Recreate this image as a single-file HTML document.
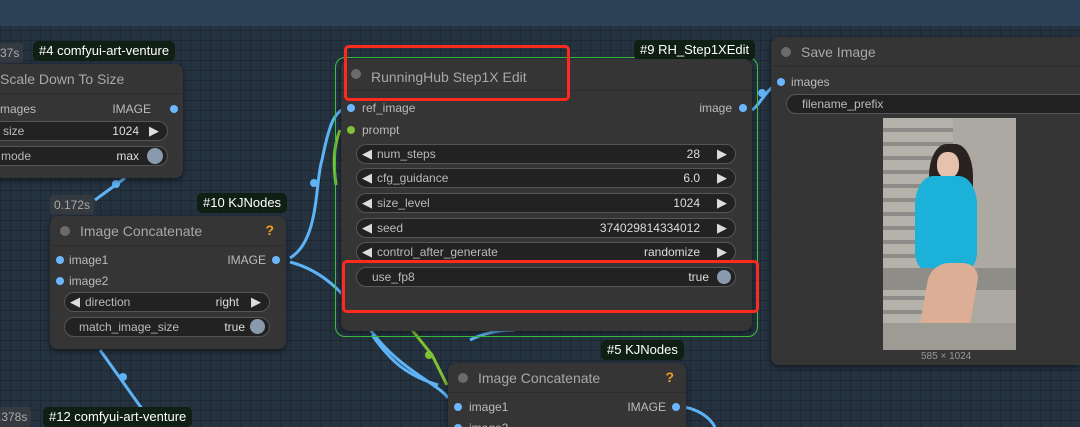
<!DOCTYPE html>
<html><head><meta charset="utf-8"><style>
*{margin:0;padding:0;box-sizing:border-box}
html,body{width:1080px;height:427px;overflow:hidden}
body{position:relative;font-family:"Liberation Sans",sans-serif;
background-color:#253240;
background-image:linear-gradient(rgba(0,0,0,.18) 1px,transparent 1px),linear-gradient(90deg,rgba(0,0,0,.18) 1px,transparent 1px);
background-size:10px 10px;}
.top{position:absolute;left:0;top:0;width:1080px;height:26px;background:#2c4256}
.node{position:absolute;background:#353535;border-radius:8px;box-shadow:0 2px 6px rgba(0,0,0,.5);overflow:hidden}
.title{height:30px;border-bottom:1px solid #2e2e2e;color:#a8a8a8;font-size:14px;line-height:30px;padding-left:30px;position:relative}
.title:before{content:"";position:absolute;left:10px;top:10px;width:10px;height:10px;border-radius:50%;background:#6b6b6b}
.badge{position:absolute;background:#0f1f14;color:#fff;font-size:13px;padding:0 6px;height:20px;line-height:20px;border-radius:5px}
.tm{position:absolute;background:#343a40;color:#aaa;font-size:12px;height:20px;line-height:20px;padding:0 4px;border-radius:4px}
.slot{position:absolute;font-size:12px;color:#bbb}
.dot{position:absolute;width:8px;height:8px;border-radius:50%;background:#6ab7ff}
.w{position:absolute;height:20px;border:1px solid #555;border-radius:10px;background:#222;color:#bbb;font-size:12px;line-height:18px}
.w .l{position:absolute;left:8px}
.w .v{position:absolute;right:24px;color:#ddd}
.w .ar{position:absolute;right:5px;color:#ddd;font-size:13px}
.w .al{position:absolute;left:5px;color:#ddd;font-size:13px}
.tg{position:absolute;right:4px;top:3px;width:13px;height:13px;border-radius:50%;background:#8a9aae}
.red{position:absolute;border:3px solid #ff2a1f;border-radius:5px}
.q{position:absolute;color:#f0a020;font-weight:bold;font-size:14px}
</style></head><body>
<div class="top"></div>
<svg width="1080" height="427" style="position:absolute;left:0;top:0" fill="none">
<g stroke="#5db3f5" stroke-width="3">
<path d="M95 200 L125 178"/>
<path d="M290 258 C320 240 315 180 322 160 C330 120 335 110 350 107"/>
<path d="M290 262 C340 275 360 320 372 332 C400 370 440 385 448 398"/>
<path d="M100 350 L150 420"/>
<path d="M752 110 C760 105 762 95 775 85"/>
<path d="M372 335 C390 360 405 375 438 385"/>
<path d="M470 340 C480 335 495 330 515 330"/>
<path d="M684 407 C700 410 710 418 715 427"/>
</g>
<path d="M340 130 C332 150 334 170 336 185" stroke="#7fc034" stroke-width="3"/>
<path d="M412 330 L432 355 L447 385" stroke="#7fc034" stroke-width="3"/>
<circle cx="116" cy="184" r="4" fill="#5db3f5"/>
<circle cx="314" cy="183" r="4" fill="#5db3f5"/>
<circle cx="123" cy="377" r="4" fill="#5db3f5"/>
<circle cx="762" cy="93" r="4" fill="#5db3f5"/>
<circle cx="429" cy="355" r="4" fill="#7fc034"/>
</svg>

<div class="tm" style="left:-4px;top:43px">37s</div>
<div class="badge" style="left:33px;top:41px">#4 comfyui-art-venture</div>
<div class="node" style="left:-20px;top:64px;width:203px;height:114px">
<div class="title" style="padding-left:20px">Scale Down To Size</div>
<div class="slot" style="left:20px;top:38px">mages</div>
<div class="slot" style="right:32px;top:38px">IMAGE</div>
<div class="dot" style="right:5px;top:41px"></div>
<div class="w" style="left:0;top:57px;width:188px"><span class="l" style="left:22px">size</span><span class="v" style="right:28px">1024</span><span class="ar" style="right:8px">▶</span></div>
<div class="w" style="left:0;top:82px;width:188px"><span class="l" style="left:20px">mode</span><span class="v" style="right:28px">max</span><div class="tg" style="width:16px;height:16px;top:1px"></div></div>
</div>

<div class="tm" style="left:50px;top:195px">0.172s</div>
<div class="badge" style="left:197px;top:193px">#10 KJNodes</div>
<div class="node" style="left:50px;top:216px;width:236px;height:133px">
<div class="title">Image Concatenate</div><span class="q" style="right:12px;top:6px">?</span>
<div class="dot" style="left:6px;top:40px"></div><div class="slot" style="left:19px;top:37px">image1</div>
<div class="slot" style="right:20px;top:37px">IMAGE</div><div class="dot" style="right:6px;top:40px"></div>
<div class="dot" style="left:6px;top:61px"></div><div class="slot" style="left:19px;top:58px">image2</div>
<div class="w" style="left:14px;top:76px;width:206px"><span class="al">◀</span><span class="l" style="left:20px">direction</span><span class="v" style="right:30px">right</span><span class="ar" style="right:8px">▶</span></div>
<div class="w" style="left:14px;top:101px;width:206px"><span class="l" style="left:14px">match_image_size</span><span class="v" style="right:24px">true</span><div class="tg" style="width:15px;height:15px;top:1px"></div></div>
</div>

<div style="position:absolute;left:335px;top:57px;width:423px;height:280px;border:1.5px solid #3cc43c;border-radius:10px"></div>
<div class="badge" style="left:634px;top:40px">#9 RH_Step1XEdit</div>
<div class="node" style="left:341px;top:59px;width:411px;height:272px">
<div class="title" style="height:32px;line-height:36px">RunningHub Step1X Edit</div>
<div class="dot" style="left:6px;top:45px"></div><div class="slot" style="left:21px;top:42px">ref_image</div>
<div class="slot" style="right:20px;top:42px">image</div><div class="dot" style="right:5px;top:45px"></div>
<div class="dot" style="left:6px;top:67px;background:#7fc034"></div><div class="slot" style="left:21px;top:64px">prompt</div>
<div class="w" style="left:15px;top:85px;width:380px"><span class="al">◀</span><span class="l" style="left:20px">num_steps</span><span class="v" style="right:35px">28</span><span class="ar" style="right:8px">▶</span></div>
<div class="w" style="left:15px;top:109px;width:380px"><span class="al">◀</span><span class="l" style="left:20px">cfg_guidance</span><span class="v" style="right:35px">6.0</span><span class="ar" style="right:8px">▶</span></div>
<div class="w" style="left:15px;top:134px;width:380px"><span class="al">◀</span><span class="l" style="left:20px">size_level</span><span class="v" style="right:35px">1024</span><span class="ar" style="right:8px">▶</span></div>
<div class="w" style="left:15px;top:159px;width:380px"><span class="al">◀</span><span class="l" style="left:20px">seed</span><span class="v" style="right:35px">374029814334012</span><span class="ar" style="right:8px">▶</span></div>
<div class="w" style="left:15px;top:183px;width:380px"><span class="al">◀</span><span class="l" style="left:20px">control_after_generate</span><span class="v" style="right:35px">randomize</span><span class="ar" style="right:8px">▶</span></div>
<div class="w" style="left:15px;top:208px;width:380px"><span class="l" style="left:15px">use_fp8</span><span class="v" style="right:26px">true</span><div class="tg" style="width:14px;height:14px;top:2px"></div></div>
</div>
<div class="red" style="left:344px;top:45px;width:226px;height:56px"></div>
<div class="red" style="left:342px;top:260px;width:417px;height:53px"></div>

<div class="node" style="left:771px;top:37px;width:309px;height:328px;border-radius:8px 0 0 8px">
<div class="title">Save Image</div>
<div class="dot" style="left:6px;top:41px"></div><div class="slot" style="left:20px;top:38px">images</div>
<div class="w" style="left:15px;top:57px;width:320px"><span class="l" style="left:15px">filename_prefix</span></div>
<div style="position:absolute;left:112px;top:81px;width:133px;height:232px;background:repeating-linear-gradient(180deg,#b5b2ab 0 10px,#8d8c88 10px 14px);overflow:hidden">
<div style="position:absolute;left:70px;top:0;width:63px;height:232px;background:#aca9a2"></div>
<div style="position:absolute;left:46px;top:26px;width:44px;height:80px;border-radius:40% 40% 20% 20%;background:#2a2220"></div>
<div style="position:absolute;left:54px;top:34px;width:22px;height:26px;border-radius:45%;background:#e6c2ae"></div>
<div style="position:absolute;left:32px;top:58px;width:62px;height:95px;border-radius:30% 30% 20% 20%;background:#1bb1d8"></div>
<div style="position:absolute;left:0;top:150px;width:133px;height:22px;background:#8f8d88"></div>
<div style="position:absolute;left:40px;top:145px;width:50px;height:88px;background:#dcae96;transform:skewX(-10deg);border-radius:18px"></div>
<div style="position:absolute;left:0;top:205px;width:133px;height:27px;background:#9e9b94"></div>
</div>
<div style="position:absolute;left:150px;top:314px;font-size:10px;color:#999">585 × 1024</div>
</div>

<div class="badge" style="left:601px;top:340px">#5 KJNodes</div>
<div class="node" style="left:448px;top:363px;width:238px;height:64px;border-radius:8px 8px 0 0">
<div class="title">Image Concatenate</div><span class="q" style="right:12px;top:6px">?</span>
<div class="dot" style="left:6px;top:40px"></div><div class="slot" style="left:21px;top:37px">image1</div>
<div class="slot" style="right:20px;top:37px">IMAGE</div><div class="dot" style="right:6px;top:40px"></div>
<div class="dot" style="left:6px;top:61px"></div><div class="slot" style="left:21px;top:58px">image2</div>
</div>

<div class="tm" style="left:-6px;top:407px">.378s</div>
<div class="badge" style="left:43px;top:407px">#12 comfyui-art-venture</div>
</body></html>
